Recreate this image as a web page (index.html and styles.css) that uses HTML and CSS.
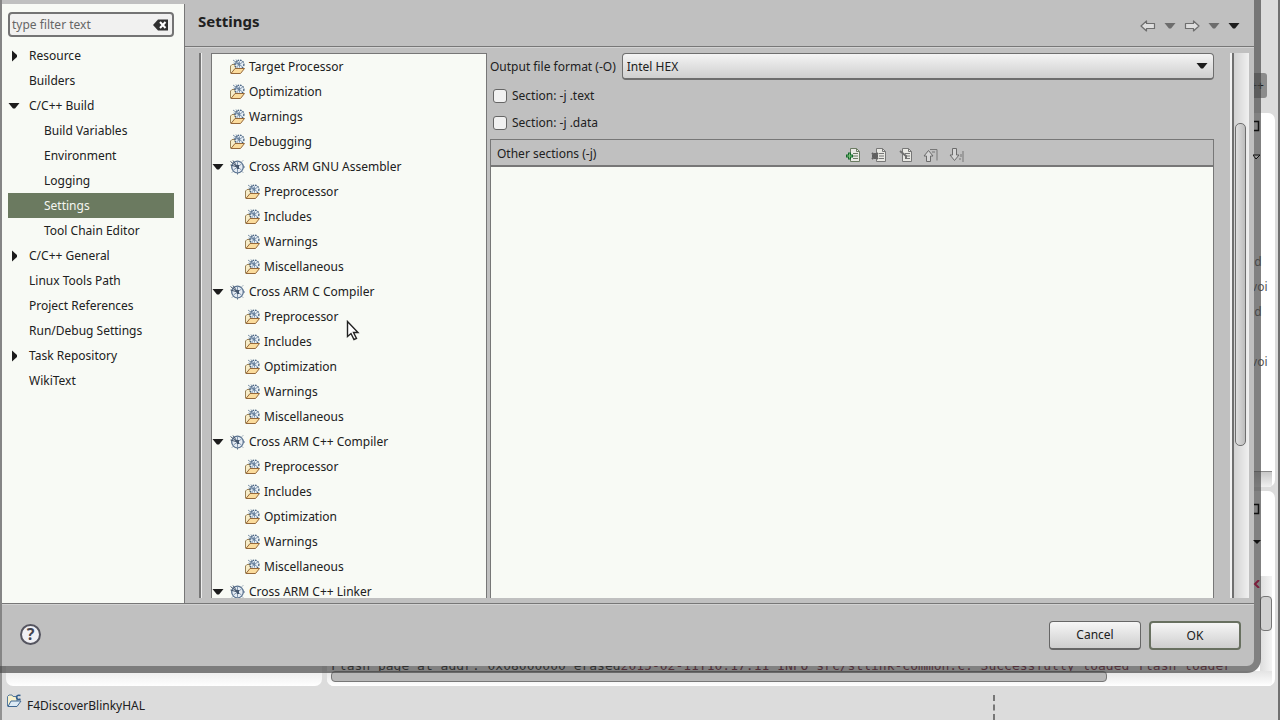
FILE: index.html
```html
<!DOCTYPE html>
<html lang="en">
<head>
<meta charset="utf-8">
<title>Properties for F4DiscoverBlinkyHAL</title>
<link rel="stylesheet" href="styles.css">
</head>
<body>
<svg class="sprites" aria-hidden="true">
  <symbol id="gear" viewBox="0 0 16 16">
    <circle cx="8.500" cy="8" r="5.800" fill="#e6ecf3" stroke="#5b7390" stroke-width="1.300"/>
    <path d="M8.500 8V3M8.500 8l4-3M8.500 8l4 3M8.500 8v5M8.500 8l-4 3" stroke="#8298b0" stroke-width="1"/>
    <path d="M1.500 2.500L8.500 8M4 1.500L8.500 8M1.500 6L8.500 8" stroke="#45566d" stroke-width="1"/>
    <path d="M7 6h3v4H8z" fill="#45566d"/>
    <path d="M13 2.500l1-1M14.500 8H16M13 12.500l1 1M8.500 14v1.500M4 12.500l-1 1" stroke="#5b7390"/>
  </symbol>
  <symbol id="folder" viewBox="0 0 16 16">
    <path d="M1.500 14V7L3 5.500h3V8h5v6z" fill="#f7edc9" stroke="#9a8258"/>
    <circle cx="10.500" cy="5.500" r="4.400" fill="#e6eef5" stroke="#44607f" stroke-width="1.300" stroke-dasharray="1.600 1"/>
    <path d="M4 1l6 4.500M7 .5l3.500 5M4.500 4l6 1.500M10.500 2.500v6M13 3.500l-5 4M8.500 4l4.500 3.500" stroke="#5f7a98" stroke-width=".8"/>
    <path d="M2 14.500L6 9.500h9.500L11.500 14.500z" fill="#fbdc9d" stroke="#96683a"/>
  </symbol>
  <symbol id="down" viewBox="0 0 12 8"><path d="M.5 1h11L7 6.500H5z" fill="#1c1c1c"/></symbol>
  <symbol id="right" viewBox="0 0 8 12"><path d="M1 .5v11l5-4.500V5z" fill="#1c1c1c"/></symbol>
  <symbol id="page" viewBox="0 0 16 16">
    <path d="M5.500 1.500h6l3 3v10h-9z" fill="#e9e9e4" stroke="currentColor"/>
    <path d="M11.500 1.500v3h3M8 6.500h5M8 9h5M8 11.500h5" fill="none" stroke="currentColor"/>
  </symbol>
  <symbol id="back" viewBox="0 0 16 12"><path d="M1 6l5.500-5v2.500h8v5h-8V11z" fill="#dedede" stroke="#6e6e6e" stroke-width="1.200" stroke-linejoin="round"/></symbol>
</svg>

<div class="workbench">
  <div class="bench-views">
    <div class="view view-left"></div>
    <div class="bench-right">
      <div class="bench-toolbar"><span class="perspective">C/C++</span></div>
      <div class="view editor">
        <pre class="code">  d
 voi
  d

 voi</pre>
        <div class="editor-scroll"></div>
      </div>
      <div class="view console">
        <div class="console-body">
          <pre class="log">Flash page at addr: 0x08000000 erased<span class="log-error">2015-02-11T10:17:11 INFO src/stlink-common.c: Successfully loaded flash loader</span></pre>
          <div class="console-scroll"><div class="console-thumb"></div></div>
        </div>
        <div class="hscroll"><div class="hthumb"></div></div>
      </div>
    </div>
  </div>
  <footer class="status">
    <svg class="icon" viewBox="0 0 16 16"><path d="M1.500 13V3.500L3 2h3l1 1.500h4V13z" fill="#f8f1cd" stroke="#54799c"/><path d="M2 13.500L5 8h10l-4 5.500z" fill="#dceaf5" stroke="#3f6791"/><path d="M14.500 2.500c-3-1-4 .5-4 2s2 2.500 4 1.500" fill="none" stroke="#35608d" stroke-width="1.500"/></svg>
    <span class="status-text">F4DiscoverBlinkyHAL</span>
    <span class="status-sep"></span>
  </footer>
</div>

<div class="dialog" role="dialog" aria-labelledby="title">
  <div class="dialog-body">
    <aside class="sidebar">
      <div class="filter">
        <input class="filter-input" type="text" placeholder="type filter text" aria-label="Filter">
        <button class="filter-clear" type="button" aria-label="Clear filter">
          <svg width="16" height="12" viewBox="0 0 16 12"><path d="M0 6l5-5.500h10v11H5z" fill="#303030"/><path d="M7 3l5.500 6M12.500 3L7 9" stroke="#fff" stroke-width="2"/></svg>
        </button>
      </div>
      <ul class="tree">
        <li class="row"><span class="twisty"><svg class="tri-right"><use href="#right"/></svg></span>Resource</li>
        <li class="row"><span class="twisty"></span>Builders</li>
        <li class="row"><span class="twisty"><svg class="tri-down"><use href="#down"/></svg></span>C/C++ Build</li>
        <li class="row sub">Build Variables</li>
        <li class="row sub">Environment</li>
        <li class="row sub">Logging</li>
        <li class="row sub selected">Settings</li>
        <li class="row sub">Tool Chain Editor</li>
        <li class="row"><span class="twisty"><svg class="tri-right"><use href="#right"/></svg></span>C/C++ General</li>
        <li class="row"><span class="twisty"></span>Linux Tools Path</li>
        <li class="row"><span class="twisty"></span>Project References</li>
        <li class="row"><span class="twisty"></span>Run/Debug Settings</li>
        <li class="row"><span class="twisty"><svg class="tri-right"><use href="#right"/></svg></span>Task Repository</li>
        <li class="row"><span class="twisty"></span>WikiText</li>
      </ul>
    </aside>

    <main class="main">
      <header class="header">
        <h1 class="title" id="title">Settings</h1>
        <nav class="history">
          <button class="tool" type="button" aria-label="Back"><svg width="16" height="12"><use href="#back"/></svg></button>
          <button class="tool faded" type="button" aria-label="Back history"><svg class="tri-down"><use href="#down"/></svg></button>
          <button class="tool flip" type="button" aria-label="Forward"><svg width="16" height="12"><use href="#back"/></svg></button>
          <button class="tool faded" type="button" aria-label="Forward history"><svg class="tri-down"><use href="#down"/></svg></button>
          <button class="tool" type="button" aria-label="Menu"><svg class="tri-down"><use href="#down"/></svg></button>
        </nav>
      </header>

      <div class="content">
        <div class="page-frame">
          <ul class="tree tools">
            <li class="row leaf"><svg class="icon"><use href="#folder"/></svg>Target Processor</li>
            <li class="row leaf"><svg class="icon"><use href="#folder"/></svg>Optimization</li>
            <li class="row leaf"><svg class="icon"><use href="#folder"/></svg>Warnings</li>
            <li class="row leaf"><svg class="icon"><use href="#folder"/></svg>Debugging</li>
            <li class="row"><span class="twisty"><svg class="tri-down"><use href="#down"/></svg></span><svg class="icon"><use href="#gear"/></svg>Cross ARM GNU Assembler</li>
            <li class="row sub"><svg class="icon"><use href="#folder"/></svg>Preprocessor</li>
            <li class="row sub"><svg class="icon"><use href="#folder"/></svg>Includes</li>
            <li class="row sub"><svg class="icon"><use href="#folder"/></svg>Warnings</li>
            <li class="row sub"><svg class="icon"><use href="#folder"/></svg>Miscellaneous</li>
            <li class="row"><span class="twisty"><svg class="tri-down"><use href="#down"/></svg></span><svg class="icon"><use href="#gear"/></svg>Cross ARM C Compiler</li>
            <li class="row sub"><svg class="icon"><use href="#folder"/></svg>Preprocessor</li>
            <li class="row sub"><svg class="icon"><use href="#folder"/></svg>Includes</li>
            <li class="row sub"><svg class="icon"><use href="#folder"/></svg>Optimization</li>
            <li class="row sub"><svg class="icon"><use href="#folder"/></svg>Warnings</li>
            <li class="row sub"><svg class="icon"><use href="#folder"/></svg>Miscellaneous</li>
            <li class="row"><span class="twisty"><svg class="tri-down"><use href="#down"/></svg></span><svg class="icon"><use href="#gear"/></svg>Cross ARM C++ Compiler</li>
            <li class="row sub"><svg class="icon"><use href="#folder"/></svg>Preprocessor</li>
            <li class="row sub"><svg class="icon"><use href="#folder"/></svg>Includes</li>
            <li class="row sub"><svg class="icon"><use href="#folder"/></svg>Optimization</li>
            <li class="row sub"><svg class="icon"><use href="#folder"/></svg>Warnings</li>
            <li class="row sub"><svg class="icon"><use href="#folder"/></svg>Miscellaneous</li>
            <li class="row"><span class="twisty"><svg class="tri-down"><use href="#down"/></svg></span><svg class="icon"><use href="#gear"/></svg>Cross ARM C++ Linker</li>
          </ul>

          <form class="options">
            <div class="field">
              <label class="field-label" for="format">Output file format (-O)</label>
              <div class="combo">
                <select class="combo-select" id="format"><option>Intel HEX</option></select>
                <svg class="combo-arrow tri-down"><use href="#down"/></svg>
              </div>
            </div>
            <label class="check"><input class="check-box" type="checkbox">Section: -j .text</label>
            <label class="check"><input class="check-box" type="checkbox">Section: -j .data</label>
            <section class="list">
              <div class="list-head">
                <span class="list-title">Other sections (-j)</span>
                <div class="list-tools">
                  <button class="tool on" type="button" aria-label="Add"><svg class="icon" viewBox="0 0 16 16"><use href="#page"/><path d="M1 9h7M4.500 5.500v7" stroke="#15682a" stroke-width="3"/><path d="M2 9h5M4.500 6.500v5" stroke="#7cc47c"/></svg></button>
                  <button class="tool" type="button" aria-label="Delete" disabled><svg class="icon" viewBox="0 0 16 16"><use href="#page"/><path d="M1 6l6 6M7 6l-6 6M4 6v6M1 9h6" stroke="#606060" stroke-width="2"/></svg></button>
                  <button class="tool" type="button" aria-label="Edit" disabled><svg class="icon" viewBox="0 0 16 16"><use href="#page"/><path d="M3 4l6 5v3" fill="none" stroke="#707070" stroke-width="2"/></svg></button>
                  <button class="tool" type="button" aria-label="Move up" disabled><svg class="icon" viewBox="0 0 16 16"><path d="M7 2.500h7v11M9 5h3" fill="none" stroke="#777"/><path d="M5.500 3.500L1 9h2.500v5.500h4V9H10z" fill="#d5d5d5" stroke="#6b6b6b"/></svg></button>
                  <button class="tool" type="button" aria-label="Move down" disabled><svg class="icon" viewBox="0 0 16 16"><path d="M14 4v11M10 12h2M12 7v3" fill="none" stroke="#777"/><path d="M5.500 13.500L1 8h2.500V1.500h4V8H10z" fill="#d5d5d5" stroke="#6b6b6b"/></svg></button>
                </div>
              </div>
              <div class="list-body"></div>
            </section>
          </form>
        </div>
        <div class="vscroll"><div class="vthumb"></div></div>
      </div>
    </main>
  </div>

  <footer class="actions">
    <button class="help" type="button" aria-label="Help">?</button>
    <div class="buttons">
      <button class="btn" type="button">Cancel</button>
      <button class="btn default" type="submit">OK</button>
    </div>
  </footer>
</div>

<div class="marks" aria-hidden="true">
  <svg class="mark mark-a" viewBox="0 0 6 12"><path d="M0 1.500h4.500v9H0" fill="none" stroke="#111" stroke-width="1.500"/></svg>
  <svg class="mark mark-b" viewBox="0 0 8 6"><path d="M0 1h7L3 5z" fill="#999" stroke="#111"/></svg>
  <svg class="mark mark-c" viewBox="0 0 6 12"><path d="M0 1.500h4.500v9H0" fill="none" stroke="#111" stroke-width="1.500"/></svg>
  <svg class="mark mark-d" viewBox="0 0 8 6"><path d="M0 1h8L4 5z" fill="#111"/></svg>
  <svg class="mark mark-e" viewBox="0 0 6 8"><path d="M5 0L1 4l4 4" fill="none" stroke="#7c1f3c" stroke-width="2"/></svg>
</div>

<svg class="pointer" viewBox="0 0 14 22" aria-hidden="true"><path d="M1.500 1.500v15l3.500-3 3 6 2.500-1-3-6H12z" fill="#fff" stroke="#222" stroke-width="1.400"/></svg>
</body>
</html>
```
FILE: styles.css
```css
* { box-sizing: border-box; }

html, body { height: 100%; }

body {
  margin: 0;
  position: relative;
  overflow: hidden;
  background: #dcdcdc;
  color: #202020;
  font: 12px/25px "Noto Sans", "Open Sans", sans-serif;
}

button, input, select { font: inherit; color: inherit; }
ul { list-style: none; margin: 0; padding: 0; }
pre { margin: 0; }
svg { display: block; flex: none; }

.sprites { position: absolute; width: 0; height: 0; }
.icon { width: 16px; height: 16px; }
.tri-down { width: 12px; height: 8px; }
.tri-right { width: 8px; height: 12px; }

/* Workbench window behind the dialog */
.workbench {
  position: absolute;
  inset: 0;
  display: flex;
  flex-direction: column;
  border-left: 2px solid #929292;
  border-right: 2px solid #707070;
  background: #dcdcdc;
}
.bench-views {
  flex: 1;
  min-height: 0;
  display: flex;
  gap: 5px;
  padding: 0 3px 0 4px;
}
.view { background: #fff; border-radius: 0 0 7px 7px; overflow: hidden; }
.view-left { width: 316px; background: linear-gradient(#f0f0f0, #fff) bottom / 100% 12px no-repeat #f0f0f0; }
.bench-right {
  flex: 1;
  min-width: 0;
  display: flex;
  flex-direction: column;
  gap: 4px;
}
.bench-toolbar {
  height: 109px;
  padding: 73px 8px 0 0;
  display: flex;
  justify-content: flex-end;
  align-items: flex-start;
}
.perspective {
  padding: 0 3px 0 20px;
  border-radius: 3px;
  background: #8c8c8c;
}
.editor {
  flex: 1;
  border-radius: 7px;
  display: flex;
  flex-direction: column;
  justify-content: space-between;
}
.code {
  align-self: flex-end;
  width: 24px;
  margin-right: 3px;
  padding-top: 136px;
  color: #555;
  font: inherit;
}
.editor-scroll {
  height: 16px;
  margin-right: 3px;
  border-top: 1px solid #888;
  background: linear-gradient(#c8c8c8, #f0f0f0);
}
.console {
  height: 195px;
  padding-right: 3px;
  border-radius: 7px;
  display: flex;
  flex-direction: column;
}
.console-body {
  flex: 1;
  min-height: 0;
  display: flex;
  justify-content: space-between;
  align-items: flex-end;
}
.log {
  padding-left: 4px;
  height: 14px;
  flex: 1;
  min-width: 0;
  overflow: hidden;
  white-space: pre;
  color: #000;
  font: 13px/18px "DejaVu Sans Mono", monospace;
}
.log-error { color: #6c0020; }
.console-scroll {
  width: 12px;
  height: 95px;
  padding-top: 20px;
  background: linear-gradient(90deg, #ddd, #f4f4f4);
}
.console-thumb {
  height: 35px;
  border: 1px solid #777;
  border-radius: 4px;
  background: #d0d0d0;
}
.hscroll {
  height: 15px;
  padding: 0 165px 4px 4px;
  background: linear-gradient(#e4e4e4, #fff);
}
.hthumb {
  height: 11px;
  border: 1px solid #777;
  border-radius: 4px;
  background: #b8b8b8;
}
.status {
  height: 34px;
  padding: 7px 283px 0 4px;
  display: flex;
  align-items: flex-start;
  gap: 5px;
}
.status-text { flex: 1; }
.status-sep { align-self: stretch; margin-top: 2px; border-left: 2px dashed #777; }

/* Toolbar glyphs of the workbench views, at the dialog's edge */
.mark { position: absolute; right: 19px; width: 8px; }
.mark-a { top: 120px; height: 12px; }
.mark-b { top: 154px; height: 6px; }
.mark-c { top: 503px; height: 12px; }
.mark-d { top: 539px; height: 6px; }
.mark-e { top: 580px; height: 8px; }

/* Dialog window */
.dialog {
  position: absolute;
  inset: 0 26px 54px 0;
  display: flex;
  flex-direction: column;
  border-left: 2px solid #858585;
  border-radius: 0 0 7px 0;
  background: #c0c0c0;
  box-shadow: 0 0 0 7px rgba(70, 70, 70, .68);
}
.dialog-body {
  flex: 1;
  min-height: 0;
  display: flex;
}
.sidebar {
  width: 183px;
  margin-top: 4px;
  padding: 8px 10px 0 6px;
  border-right: 1px solid #777;
  background: #f8faf5;
}
.filter {
  display: flex;
  align-items: center;
  height: 25px;
  margin-bottom: 6px;
  padding: 0 3px 0 2px;
  border: 2px solid #747474;
  border-radius: 4px;
  background: #f1f1f0;
}
.filter-input {
  flex: 1;
  min-width: 0;
  height: 21px;
  padding: 0;
  border: 0;
  outline: 0;
  background: none;
}
.filter-input::placeholder { color: #666; opacity: 1; }
.filter-clear { padding: 0; border: 0; background: none; }

.row {
  display: flex;
  align-items: center;
  height: 25px;
  white-space: nowrap;
}
.row.sub { padding-left: 36px; }
.row.selected { background: #6b7a60; color: #f4f6f1; }
.twisty { width: 21px; flex: none; }
.twisty .tri-right { margin-left: 3px; }

.main {
  flex: 1;
  min-width: 0;
  display: flex;
  flex-direction: column;
}
.header {
  height: 47px;
  padding: 0 14px 0 13px;
  display: flex;
  justify-content: space-between;
  align-items: center;
  border-bottom: 1px solid #777;
  box-shadow: 0 1px 0 #d2d2d2;
}
.title {
  margin: 0 0 4px;
  font-size: 15px;
  font-weight: 700;
}
.history {
  display: flex;
  align-items: center;
  gap: 8px;
  padding-top: 6px;
}
.tool {
  padding: 0;
  border: 0;
  background: none;
  color: #777;
}
.tool.on { color: #6b7b62; }
.faded { opacity: .5; }
.flip svg { transform: scaleX(-1); }

.content {
  flex: 1;
  min-height: 0;
  display: flex;
  padding: 6px 5px 5px 14px;
}
.page-frame {
  flex: 1;
  min-width: 0;
  display: flex;
  gap: 3px;
  padding: 0 16px 0 10px;
  border-left: 2px solid #777;
  border-right: 2px solid #f2f2f2;
  box-shadow: inset 1px 0 0 #eee;
}
.tools {
  width: 276px;
  overflow: hidden;
  border: 1px solid #777;
  border-bottom: 0;
  background: #f8faf5;
}
.tools .twisty { width: 17px; }
.tools .icon { margin-right: 4px; }
.tools .leaf { padding-left: 17px; }
.tools .sub { padding-left: 32px; }

.options {
  flex: 1;
  min-width: 0;
  display: flex;
  flex-direction: column;
}
.field { display: flex; align-items: center; gap: 6px; }
.combo { position: relative; flex: 1; }
.combo-select {
  display: block;
  width: 100%;
  height: 27px;
  padding: 0 4px;
  appearance: none;
  border: 1px solid #6e6e6e;
  border-bottom-width: 2px;
  border-radius: 4px;
  background: linear-gradient(#f4f4f4, #cfcfcf);
}
.combo-arrow { position: absolute; right: 6px; top: 9px; pointer-events: none; }
.check {
  display: flex;
  align-items: center;
  gap: 5px;
  height: 27px;
  padding-left: 3px;
}
.field + .check { margin-top: 2px; }
.check-box {
  width: 14px;
  height: 14px;
  margin: 0;
  appearance: none;
  border: 1px solid #666;
  border-radius: 3px;
  background: #f1f1f1;
}
.list {
  flex: 1;
  min-height: 0;
  display: flex;
  flex-direction: column;
  margin-top: 3px;
  border: 1px solid #777;
  border-bottom: 0;
}
.list-head {
  display: flex;
  align-items: center;
  height: 27px;
  padding: 2px 0 0 6px;
  border-bottom: 2px solid #777;
}
.list-title { flex: 0 1 348px; }
.list-tools { display: flex; gap: 10px; padding-top: 2px; }
.list-body { flex: 1; background: #f8faf5; }

.vscroll {
  width: 17px;
  padding: 70px 3px 0 1px;
  border-left: 2px solid #6f6f6f;
  background: linear-gradient(90deg, #d2d2d2, #f0f0f0);
}
.vthumb {
  width: 11px;
  height: 68%;
  max-height: 325px;
  border: 1px solid #6e6e6e;
  border-radius: 5px;
  background: linear-gradient(90deg, #dedede, #bdbdbd);
}

.actions {
  height: 63px;
  padding: 0 13px 0 18px;
  display: flex;
  justify-content: space-between;
  align-items: center;
  border-top: 1px solid #777;
  box-shadow: inset 0 1px 0 #d2d2d2;
}
.help {
  width: 21px;
  height: 21px;
  margin-bottom: 2px;
  padding: 0;
  border: 2px solid #555560;
  border-radius: 50%;
  background: #f0f0f4;
  color: #44444e;
  font-size: 16px;
  font-weight: 700;
  line-height: 16px;
}
.buttons { display: flex; gap: 8px; }
.btn {
  width: 92px;
  height: 29px;
  padding: 0;
  border: 1px solid #666;
  border-bottom-width: 2px;
  border-radius: 4px;
  background: linear-gradient(#f6f6f6, #cecece);
}
.btn.default { border: 2px solid #687060; }

.pointer {
  position: absolute;
  left: 346px;
  top: 320px;
  width: 14px;
  height: 22px;
}
```
